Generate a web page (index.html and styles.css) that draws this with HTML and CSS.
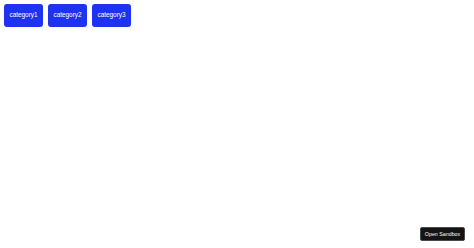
FILE: index.html
```html
<!DOCTYPE html>
<html>
<head>
<meta charset="utf-8">
<link rel="stylesheet" href="styles.css">
</head>
<body>
<div class="categories">
  <button class="cat">category1</button>
  <button class="cat">category2</button>
  <button class="cat">category3</button>
</div>
<a class="sandbox">Open Sandbox</a>
</body>
</html>
```
FILE: styles.css
```css
html, body {
  margin: 0;
  padding: 0;
  background: #fff;
  font-family: "Liberation Sans", Arial, sans-serif;
}
.categories {
  display: flex;
  gap: 5px;
  padding: 4px;
}
.cat {
  width: 39px;
  height: 23px;
  padding: 0 0 3px;
  border: none;
  border-radius: 3px;
  background: #1e32f2;
  color: #fff;
  font-family: "Liberation Sans", Arial, sans-serif;
  font-size: 6.4px;
  display: flex;
  align-items: center;
  justify-content: center;
}
.sandbox {
  position: fixed;
  right: 9px;
  bottom: 7px;
  width: 45px;
  height: 14px;
  box-sizing: border-box;
  background: #141414;
  border: 1px solid #4a4a4a;
  border-radius: 2px;
  color: #fff;
  font-size: 5.3px;
  display: flex;
  align-items: center;
  justify-content: center;
}
```
